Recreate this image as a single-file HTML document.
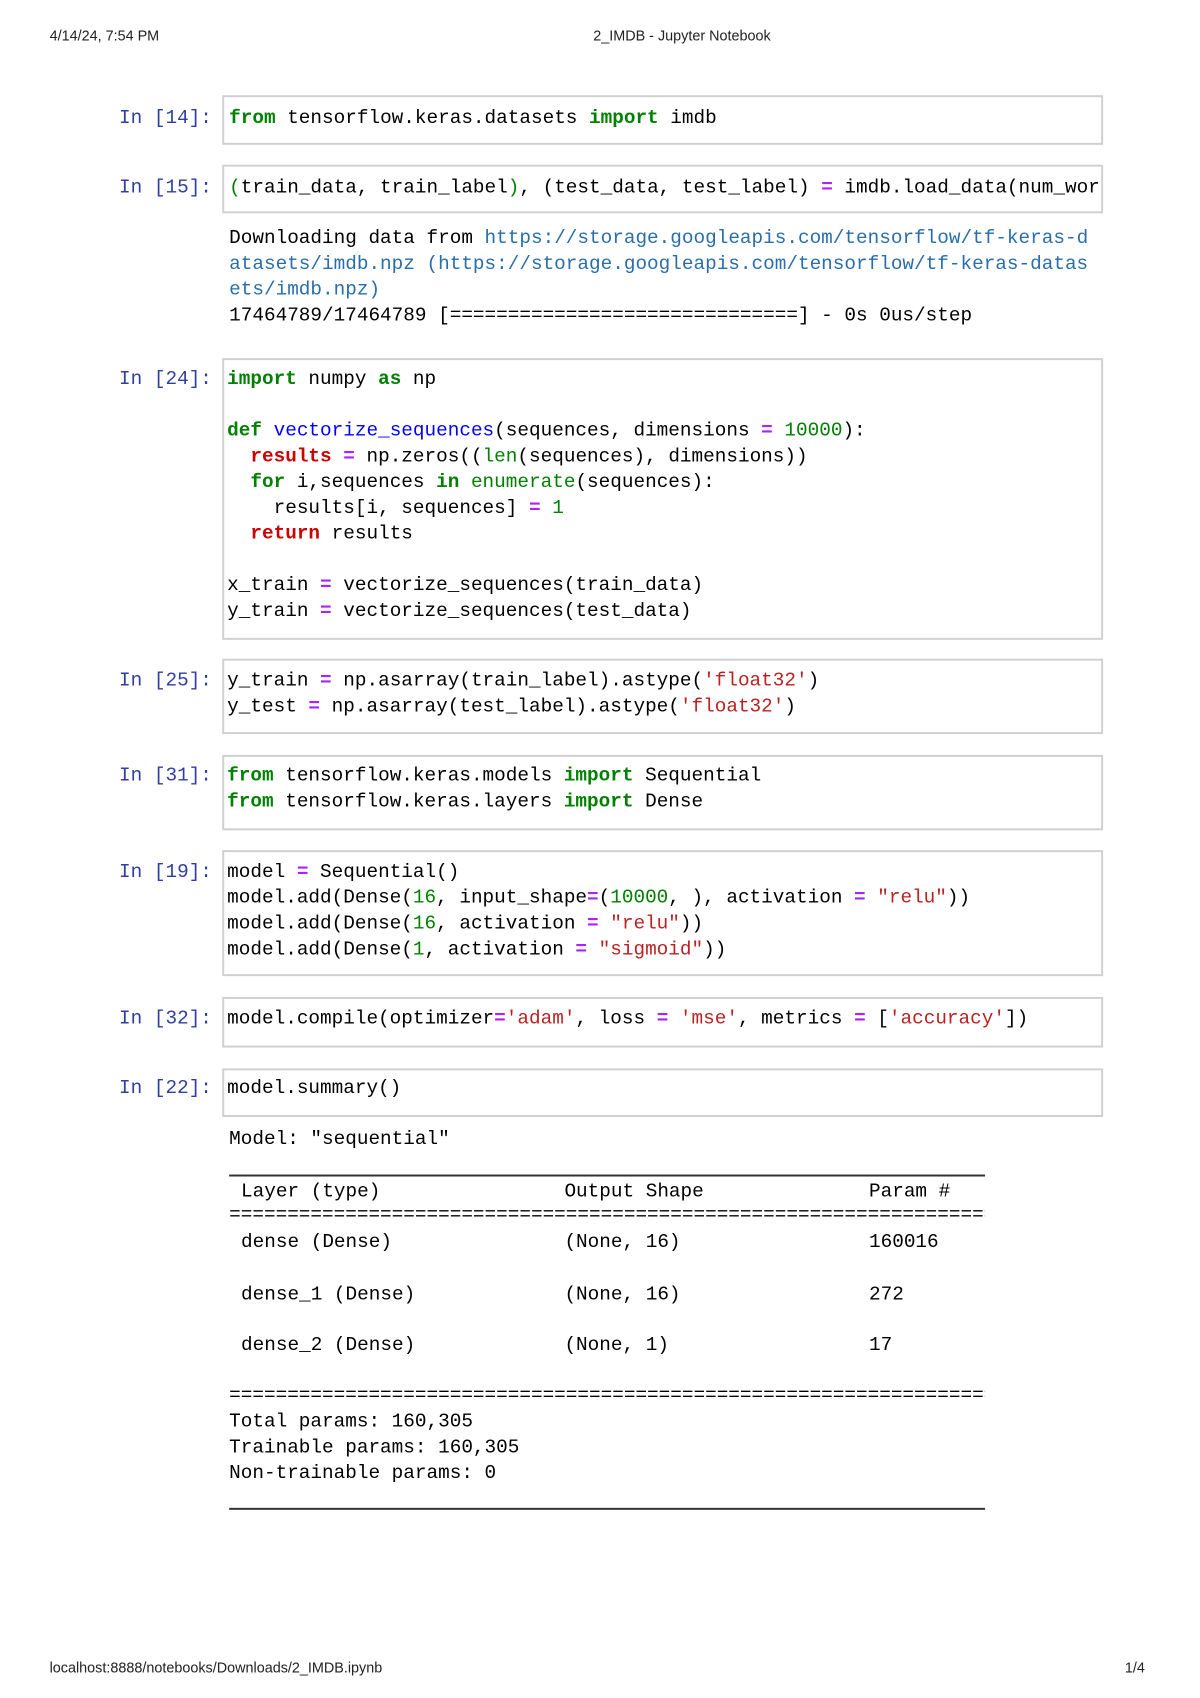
<!DOCTYPE html>
<html><head><meta charset="utf-8"><style>
body{margin:0;width:1200px;height:1698px;background:#fff;position:relative;overflow:hidden}
#w{position:absolute;left:0;top:0;width:1210px;height:1712px;transform:scale(0.992);transform-origin:0 0}
.h{position:absolute;font-family:"Liberation Sans",sans-serif;font-size:14.5px;color:#222;top:29px}
.m{font-family:"Liberation Mono",monospace;font-size:19.5px;white-space:pre;position:absolute;color:#000;line-height:26px}
.p{color:#303F9F;left:120px}
.box{position:absolute;left:224px;width:884px;border:2px solid #d0d0d0;background:#fff}
.k{color:#008000;font-weight:bold}.o{color:#AA22FF;font-weight:bold}.s{color:#BA2121}.n{color:#008000}.f{color:#0000FF}.r{color:#c00;font-weight:bold}.b{color:#008000}.l{color:#296eaa}
.line{position:absolute;left:231px;width:762px;height:0;border-top:2px solid #333}
</style></head><body><div id="w">
<div class="h" style="left:50px">4/14/24, 7:54 PM</div>
<div class="h" style="left:598px">2_IMDB - Jupyter Notebook</div>
<div class="h" style="left:50px;top:1674px">localhost:8888/notebooks/Downloads/2_IMDB.ipynb</div>
<div class="h" style="left:1134px;top:1674px">1/4</div>

<div class="box" style="top:96px;height:46px"></div>
<div class="m p" style="top:106px">In [14]:</div>
<div class="m" style="left:231px;top:106px"><span class="k">from</span> tensorflow.keras.datasets <span class="k">import</span> imdb</div>

<div class="box" style="top:166px;height:45px;overflow:hidden"></div>
<div class="m p" style="top:176px">In [15]:</div>
<div class="m" style="left:231px;top:176px;width:876px;overflow:hidden"><span class="n">(</span>train_data, train_label<span class="n">)</span>, (test_data, test_label) <span class="o">=</span> imdb.load_data(num_words</div>
<div class="m" style="left:231px;top:227px">Downloading data from <span class="l">https://storage.googleapis.com/tensorflow/tf-keras-d</span>
<span class="l">atasets/imdb.npz (https://storage.googleapis.com/tensorflow/tf-keras-datas</span>
<span class="l">ets/imdb.npz)</span>
17464789/17464789 [==============================] - 0s 0us/step</div>

<div class="box" style="top:361px;height:280px"></div>
<div class="m p" style="top:369px">In [24]:</div>
<div class="m" style="left:229px;top:369px"><span class="k">import</span> numpy <span class="k">as</span> np

<span class="k">def</span> <span class="f">vectorize_sequences</span>(sequences, dimensions <span class="o">=</span> <span class="n">10000</span>):
  <span class="r">results</span> <span class="o">=</span> np.zeros((<span class="b">len</span>(sequences), dimensions))
  <span class="k">for</span> i,sequences <span class="k">in</span> <span class="b">enumerate</span>(sequences):
    results[i, sequences] <span class="o">=</span> <span class="n">1</span>
  <span class="r">return</span> results

x_train <span class="o">=</span> vectorize_sequences(train_data)
y_train <span class="o">=</span> vectorize_sequences(test_data)</div>

<div class="box" style="top:664px;height:72px"></div>
<div class="m p" style="top:673px">In [25]:</div>
<div class="m" style="left:229px;top:673px">y_train <span class="o">=</span> np.asarray(train_label).astype(<span class="s">'float32'</span>)
y_test <span class="o">=</span> np.asarray(test_label).astype(<span class="s">'float32'</span>)</div>

<div class="box" style="top:761px;height:72px"></div>
<div class="m p" style="top:769px">In [31]:</div>
<div class="m" style="left:229px;top:769px"><span class="k">from</span> tensorflow.keras.models <span class="k">import</span> Sequential
<span class="k">from</span> tensorflow.keras.layers <span class="k">import</span> Dense</div>

<div class="box" style="top:857px;height:123px"></div>
<div class="m p" style="top:866px">In [19]:</div>
<div class="m" style="left:229px;top:866px">model <span class="o">=</span> Sequential()
model.add(Dense(<span class="n">16</span>, input_shape<span class="o">=</span>(<span class="n">10000</span>, ), activation <span class="o">=</span> <span class="s">"relu"</span>))
model.add(Dense(<span class="n">16</span>, activation <span class="o">=</span> <span class="s">"relu"</span>))
model.add(Dense(<span class="n">1</span>, activation <span class="o">=</span> <span class="s">"sigmoid"</span>))</div>

<div class="box" style="top:1005px;height:47px"></div>
<div class="m p" style="top:1014px">In [32]:</div>
<div class="m" style="left:229px;top:1014px">model.compile(optimizer<span class="o">=</span><span class="s">'adam'</span>, loss <span class="o">=</span> <span class="s">'mse'</span>, metrics <span class="o">=</span> [<span class="s">'accuracy'</span>])</div>

<div class="box" style="top:1077px;height:45px"></div>
<div class="m p" style="top:1084px">In [22]:</div>
<div class="m" style="left:229px;top:1084px">model.summary()</div>

<div class="m" style="left:231px;top:1135px">Model: "sequential"</div>
<div class="line" style="top:1184px"></div>
<div class="m" style="left:243px;top:1188px">Layer (type)</div>
<div class="m" style="left:569px;top:1188px">Output Shape</div>
<div class="m" style="left:876px;top:1188px">Param #</div>
<div class="m" style="left:231px;top:1212px;width:762px;overflow:hidden">==================================================================</div>
<div class="m" style="left:243px;top:1239px">dense (Dense)</div>
<div class="m" style="left:569px;top:1239px">(None, 16)</div>
<div class="m" style="left:876px;top:1239px">160016</div>
<div class="m" style="left:243px;top:1292px">dense_1 (Dense)</div>
<div class="m" style="left:569px;top:1292px">(None, 16)</div>
<div class="m" style="left:876px;top:1292px">272</div>
<div class="m" style="left:243px;top:1343px">dense_2 (Dense)</div>
<div class="m" style="left:569px;top:1343px">(None, 1)</div>
<div class="m" style="left:876px;top:1343px">17</div>
<div class="m" style="left:231px;top:1394px;width:762px;overflow:hidden">==================================================================</div>
<div class="m" style="left:231px;top:1420px">Total params: 160,305
Trainable params: 160,305
Non-trainable params: 0</div>
<div class="line" style="top:1520px"></div>
</div></body></html>
